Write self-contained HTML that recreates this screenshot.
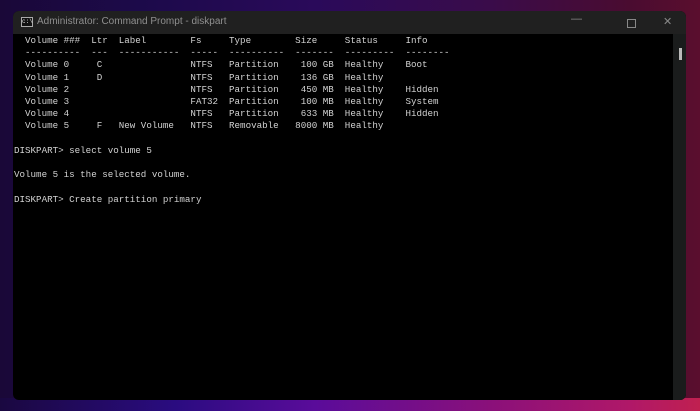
<!DOCTYPE html>
<html><head><meta charset="utf-8"><style>
html,body{margin:0;padding:0}
body{width:700px;height:411px;position:relative;overflow:hidden;
background:linear-gradient(90deg,#1a0838 0%,#1c0a4a 20%,#2a0a5a 45%,#3a0c4a 70%,#4a0c30 90%,#5a0e2e 100%);}
.bottom{position:absolute;left:0;top:398px;width:700px;height:13px;
background:linear-gradient(90deg,#1a0840 0%,#2a0c80 25%,#5a0c9a 45%,#8a107a 70%,#b01868 90%,#c02050 100%);}
.win{position:absolute;left:13px;top:11px;width:673px;height:389px;background:#000;border-radius:6px;overflow:hidden;}
.title{position:absolute;left:0;top:0;width:673px;height:23px;background:#202020;}
.title .t{position:absolute;left:24px;top:5px;font:10px "Liberation Sans",sans-serif;color:#8f8f8f;}
.ico{position:absolute;left:8px;top:6px;width:10px;height:8px;border:1px solid #aaa;background:#111;font:6px "Liberation Mono",monospace;color:#ddd;line-height:8px}
.btn{position:absolute;top:4px;color:#888;font:11px "Liberation Sans",sans-serif}
.sb{position:absolute;left:660px;top:23px;width:13px;height:366px;background:#1a1c1c}
.thumb{position:absolute;left:666px;top:48px;width:3px;height:12px;background:#bbb}
pre{position:absolute;left:1px;top:24px;margin:0;font:9.2px/12.2px "Liberation Mono",monospace;color:#d2d2d2;}
</style></head><body>
<div class="bottom"></div>
<div class="win">
<div class="title"><div class="ico">c:\</div><div class="t">Administrator: Command Prompt - diskpart</div>
<div class="btn" style="left:558px;top:2px">—</div>
<div class="btn" style="left:614px;width:7px;height:7px;border:1px solid #888;top:8px"></div>
<div class="btn" style="left:650px">✕</div></div>
<div class="sb"></div><div class="thumb" style="top:37px"></div>
<pre>  Volume ###  Ltr  Label        Fs     Type        Size     Status     Info
  ----------  ---  -----------  -----  ----------  -------  ---------  --------
  Volume 0     C                NTFS   Partition    100 GB  Healthy    Boot
  Volume 1     D                NTFS   Partition    136 GB  Healthy
  Volume 2                      NTFS   Partition    450 MB  Healthy    Hidden
  Volume 3                      FAT32  Partition    100 MB  Healthy    System
  Volume 4                      NTFS   Partition    633 MB  Healthy    Hidden
  Volume 5     F   New Volume   NTFS   Removable   8000 MB  Healthy

DISKPART&gt; select volume 5

Volume 5 is the selected volume.

DISKPART&gt; Create partition primary</pre>
</div>
</body></html>
